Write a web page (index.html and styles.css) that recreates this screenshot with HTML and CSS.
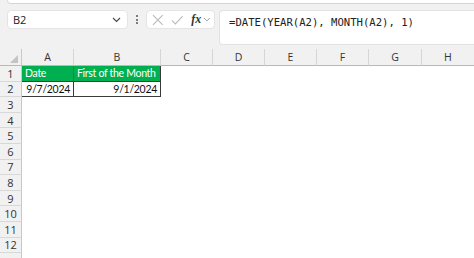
FILE: index.html
```html
<!DOCTYPE html>
<html lang="en">
<head>
    <meta charset="UTF-8">
    <title>Excel - First of the Month</title>
    <link rel="stylesheet" href="styles.css">
</head>
<body>
    <div class="ribbon-edge"></div>

    <!-- Formula bar -->
    <div class="formula-row">
        <div class="namebox">
            <span>B2</span>
            <svg class="chev" width="9" height="6" viewBox="0 0 9 6"><path d="M1 1 L4.5 4.5 L8 1" fill="none" stroke="#444" stroke-width="1.1"/></svg>
        </div>
        <div class="dots"><i></i><i></i><i></i></div>
        <div class="fx-box">
            <svg width="12" height="12" viewBox="0 0 12 12"><path d="M1 1 L11 11 M11 1 L1 11" stroke="#b8b8b8" stroke-width="1.1"/></svg>
            <svg width="13" height="12" viewBox="0 0 13 12"><path d="M1 6.5 L4.5 10 L12 2" fill="none" stroke="#b8b8b8" stroke-width="1.1"/></svg>
            <span class="fx">fx</span>
            <svg class="chev" width="8" height="5" viewBox="0 0 8 5"><path d="M1 1 L4 4 L7 1" fill="none" stroke="#999" stroke-width="1"/></svg>
        </div>
        <div class="formula">=DATE(YEAR(A2), MONTH(A2), 1)</div>
    </div>

    <!-- Sheet -->
    <div class="sheet">
        <div class="corner"><span class="tri"></span></div>
        <div class="col-head">A</div>
        <div class="col-head">B</div>
        <div class="col-head">C</div>
        <div class="col-head">D</div>
        <div class="col-head">E</div>
        <div class="col-head">F</div>
        <div class="col-head">G</div>
        <div class="col-head last">H</div>

        <div class="row-head">1</div>
        <div class="cell head-cell a">Date</div>
        <div class="cell head-cell b">First of the Month</div>
        <div class="cell rest"></div>

        <div class="row-head">2</div>
        <div class="cell data a num">9/7/2024</div>
        <div class="cell data b num">9/1/2024</div>
        <div class="cell rest"></div>

        <div class="row-head">3</div><div class="cell full"></div>
        <div class="row-head">4</div><div class="cell full"></div>
        <div class="row-head">5</div><div class="cell full"></div>
        <div class="row-head">6</div><div class="cell full"></div>
        <div class="row-head">7</div><div class="cell full"></div>
        <div class="row-head">8</div><div class="cell full"></div>
        <div class="row-head">9</div><div class="cell full"></div>
        <div class="row-head">10</div><div class="cell full"></div>
        <div class="row-head">11</div><div class="cell full"></div>
        <div class="row-head">12</div><div class="cell full"></div>
        <div class="row-head"></div><div class="cell full"></div>
    </div>
</body>
</html>
```

FILE: styles.css
```css
body {
    margin: 0;
    background: #f1f1f1;
    font-family: Lato, 'Open Sans', sans-serif;
    color: #222;
    overflow: hidden;
    height: 258px;
}

.ribbon-edge {
    height: 3px;
    margin-left: 7px;
    background: #fff;
    border-left: 1px solid #dadada;
    border-bottom: 1px solid #d4d4d4;
    border-bottom-left-radius: 5px;
}

/* Formula bar */
.formula-row {
    display: flex;
    align-items: flex-start;
    padding: 6px 0 0 7px;
    height: 37px;
}

.namebox {
    width: 121px;
    height: 19px;
    box-sizing: border-box;
    background: #fff;
    border: 1px solid #e4e4e4;
    border-radius: 4px;
    display: flex;
    align-items: center;
    justify-content: space-between;
    padding: 0 6px 0 5px;
    font-family: 'Open Sans', sans-serif;
    font-size: 11px;
    color: #222;
}

.dots {
    width: 18px;
    height: 19px;
    display: flex;
    flex-direction: column;
    align-items: center;
    justify-content: center;
    gap: 1.5px;
}

.dots i {
    width: 2px;
    height: 2px;
    background: #555;
    border-radius: 1px;
}

.fx-box {
    width: 69px;
    height: 19px;
    box-sizing: border-box;
    background: #fff;
    border: 1px solid #e4e4e4;
    border-radius: 4px;
    display: flex;
    align-items: center;
    gap: 7px;
    padding: 0 3px 0 5px;
}

.fx {
    font-family: 'Liberation Serif', serif;
    font-style: italic;
    font-weight: bold;
    font-size: 12px;
    color: #333;
    margin-left: 1px;
    margin-right: -5px;
}

.formula {
    flex: 1;
    margin-left: 4px;
    height: 35px;
    box-sizing: border-box;
    background: #fff;
    border: 1px solid #e2e2e2;
    border-right: none;
    border-radius: 4px 0 0 4px;
    padding: 5px 0 0 9px;
    font-family: 'DejaVu Sans Mono', 'Liberation Mono', monospace;
    font-size: 10.6px;
    color: #222;
}

/* Sheet grid */
.sheet {
    margin-top: 2px;
    display: grid;
    grid-template-columns: 22px 52px 87px 52px 52px 52px 52px 53px 1fr;
    grid-template-rows: 17px repeat(13, 15.6px);
    background: #fff;
}

.corner {
    background: #f1f1f1;
    border-right: 1px solid #c8c8c8;
    border-bottom: 1px solid #b8b8b8;
    position: relative;
}

.tri {
    position: absolute;
    right: 3px;
    bottom: 2px;
    width: 0;
    height: 0;
    border-left: 8px solid transparent;
    border-bottom: 8px solid #c4c4c4;
}

.col-head {
    background: #f1f1f1;
    border-right: 1px solid #d6d6d6;
    border-bottom: 1px solid #b8b8b8;
    display: flex;
    align-items: center;
    justify-content: center;
    font-family: 'Open Sans', sans-serif;
    font-size: 10.5px;
    color: #333;
}

.col-head.last {
    border-right: none;
    justify-content: flex-start;
    padding-left: 22px;
}

.row-head {
    background: #f1f1f1;
    border-right: 1px solid #c8c8c8;
    border-bottom: 1px solid #d8d8d8;
    box-sizing: border-box;
    display: flex;
    align-items: center;
    justify-content: center;
    font-family: 'Open Sans', sans-serif;
    font-size: 11px;
    color: #333;
}

.cell {
    background: #fff;
    font-size: 10.5px;
    letter-spacing: -0.3px;
    display: flex;
    align-items: center;
    padding: 0 3px 0 3px;
    white-space: nowrap;
    min-width: 0;
}

.rest { grid-column: span 6; }
.full { grid-column: span 8; }

.head-cell {
    background: #00b050;
    color: #fff;
    border-bottom: 1px solid #3a3a3a;
}

.head-cell.a {
    border-right: 1px solid #2d7a47;
}

.head-cell.b {
    border-right: 1px solid #3a3a3a;
}

.data {
    border-bottom: 1px solid #3a3a3a;
    color: #111;
}

.data.a {
    border-right: 1px solid #3a3a3a;
}

.data.b {
    border-right: 1px solid #3a3a3a;
}

.num {
    justify-content: flex-end;
}
```
